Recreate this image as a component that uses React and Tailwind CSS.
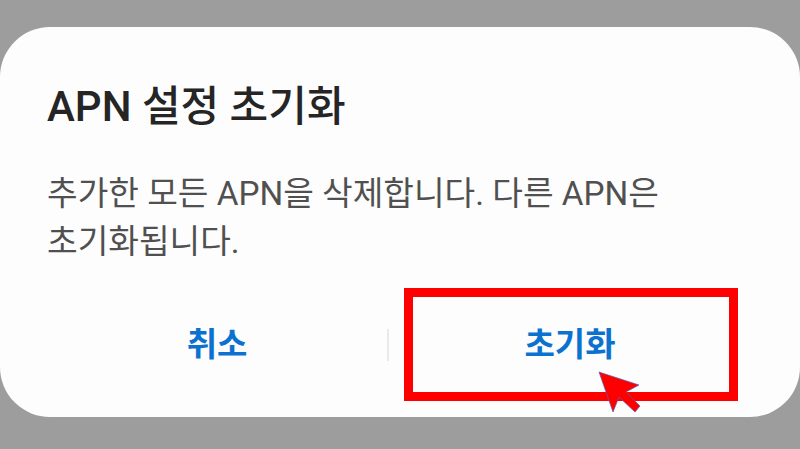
export default function App() {
  return (
    <div className="w-[800px] h-[449px] overflow-hidden bg-[#9d9d9d] pt-[27px] font-['Roboto','Noto_Sans_CJK_KR',sans-serif]">
      <div className="relative h-[390px] w-[800px] rounded-[50px] bg-[#fdfdfd] pl-[47px] pt-[55px]">
        <h1 className="text-[42px] leading-[50px] font-medium text-[#252525]">APN 설정 초기화</h1>
        <p className="mt-[38px] text-[33.3px] leading-[48px] text-[#505050] w-[720px]">
          추가한 모든 APN을 삭제합니다. 다른 APN은<br />초기화됩니다.
        </p>
        <div className="absolute left-0 right-0 top-[261px] flex h-[113px] items-center pl-[47px] pr-[62px]">
          <div className="w-[340px] text-center text-[33px] font-bold text-[#0b72cf]">취소</div>
          <div className="h-[32px] w-[2px] bg-[#e9e9e9]" />
          <div className="ml-[13px] flex-1 text-center text-[33px] font-bold text-[#0b72cf]">초기화</div>
        </div>
        <div className="absolute left-[404px] top-[261px] h-[113px] w-[334px] border-[9px] border-[#ff0000]" />
        <svg className="absolute left-[590px] top-[335px]" width="60" height="60" viewBox="590 362 60 60">
          <polygon points="599,372 639,385 626,392 640,406 635,412 619,397 613,412" fill="#ff0000" stroke="#5b5bb0" strokeWidth="0.7" strokeLinejoin="round" />
        </svg>
      </div>
    </div>
  );
}
